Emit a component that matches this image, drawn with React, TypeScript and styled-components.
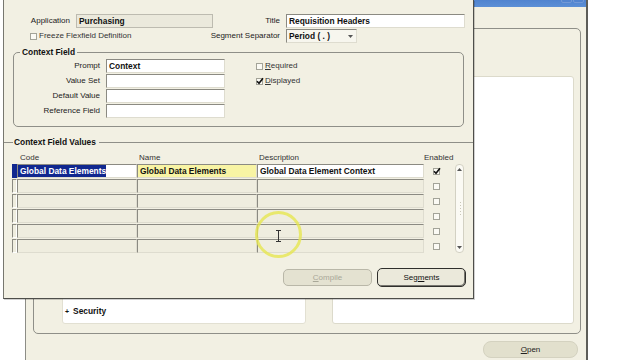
import { Fragment } from "react";
import styled, { createGlobalStyle } from "styled-components";

const GlobalStyle = createGlobalStyle`
  html, body {
    margin: 0;
    padding: 0;
    background: #fff;
  }
  body {
    font-family: "Liberation Sans", Arial, sans-serif;
    color: #1e1e1e;
  }
`;

const WINDOW_BG = "#f2f0e3";
const GROUP_LINE = "#8f8f88";

type FieldKind = "readonly" | "white" | "yellow" | "empty";

const fieldBg: Record<FieldKind, string> = {
  readonly: "#ebe9dc",
  white: "#ffffff",
  yellow: "#f8f4a4",
  empty: "#efeddf",
};

const Desktop = styled.div`
  position: relative;
  width: 640px;
  height: 360px;
  overflow: hidden;
  background: #fff;
`;

/* ---------- window behind ---------- */

const BackWindow = styled.div`
  position: absolute;
  left: 25px;
  top: -13px;
  width: 563px;
  height: 380px;
  box-sizing: border-box;
  border-left: 1px solid #8d8d86;
  border-right: 2px solid #5d5d58;
  background: ${WINDOW_BG};
  display: flex;
  flex-direction: column;
`;

const BackTitleBar = styled.div`
  flex: none;
  height: 20px;
  background: linear-gradient(#3c6dc3, #5b8fd6);
  display: flex;
  align-items: center;
  justify-content: flex-end;
  gap: 1px;
  padding-right: 2px;
`;

const TitleControl = styled.span`
  width: 11px;
  height: 12px;
  box-sizing: border-box;
  border: 1px solid #7399d6;
  border-radius: 2px;
  background: #5284cf;
`;

const BackBody = styled.div`
  flex: 1;
  display: flex;
  flex-direction: column;
  padding: 21px 5px 0 7px;
`;

const NavGroup = styled.div`
  height: 306px;
  box-sizing: border-box;
  border: 1px solid ${GROUP_LINE};
  border-radius: 5px;
  padding: 47px 6px 9px 28px;
  display: grid;
  grid-template-columns: 244px 1fr;
  column-gap: 26px;
`;

const TreePane = styled.div`
  background: #fff;
  border: 1px solid #e2e0d2;
  border-radius: 3px;
  display: flex;
  flex-direction: column;
  justify-content: flex-end;
  padding: 0 0 7px 2px;
`;

const TreeItem = styled.div`
  display: flex;
  align-items: center;
  gap: 4px;
  height: 10px;
  font-size: 8.4px;
  font-weight: bold;
  color: #111;
`;

const TreeBullet = styled.span`
  font-size: 7px;
  line-height: 7px;
`;

const ResultPane = styled.div`
  background: #fff;
  border: 1px solid #dcdacb;
  border-radius: 3px;
`;

const BackFooter = styled.div`
  display: flex;
  justify-content: flex-end;
  padding: 7px 3px 0 0;
`;

const PillButton = styled.button`
  width: 95px;
  height: 17px;
  padding: 0;
  border: 1px solid #d4d2c0;
  border-radius: 8px;
  background: #e2e0cd;
  font-family: inherit;
  font-size: 8px;
  color: #222;
`;

/* ---------- front window ---------- */

const FrontWindow = styled.div`
  position: absolute;
  left: 3px;
  top: 0;
  width: 471px;
  height: 299px;
  box-sizing: border-box;
  background: ${WINDOW_BG};
  border-left: 1px solid #77776f;
  border-right: 1px solid #4e4e4a;
  border-bottom: 1px solid #4e4e4a;
  box-shadow: 1px 1px 0 rgba(0, 0, 0, 0.18);
  display: flex;
  flex-direction: column;
`;

const HeaderGrid = styled.div`
  margin-top: 14px;
  display: grid;
  grid-template-columns: 66px 137px 61px 179px;
  grid-auto-rows: 14px;
  column-gap: 6px;
  row-gap: 1px;
`;

const Label = styled.span`
  display: flex;
  justify-content: flex-end;
  font-size: 8px;
  line-height: 14px;
  color: #222;
  white-space: nowrap;
`;

const Field = styled.div<{ $kind?: FieldKind }>`
  height: 14px;
  box-sizing: border-box;
  border: 1px solid;
  border-color: ${(p) =>
    p.$kind === "readonly"
      ? "#bdbbb0"
      : "#8b8a82 #dedccf #dedccf #8b8a82"};
  background: ${(p) => fieldBg[p.$kind ?? "white"]};
  padding: 0 2px;
  font-size: 8.4px;
  font-weight: bold;
  line-height: 12px;
  color: #111;
  white-space: nowrap;
  overflow: hidden;
`;

const Selected = styled.span`
  display: inline-block;
  margin-left: -2px;
  padding: 0 0 0 2px;
  background: #10278f;
  color: #fff;
`;

const CheckOption = styled.label<{ $span?: boolean; $indent?: number }>`
  grid-column: ${(p) => (p.$span ? "1 / span 2" : "auto")};
  display: flex;
  align-items: center;
  gap: 2px;
  padding-left: ${(p) => p.$indent ?? 0}px;
  font-size: 8px;
  line-height: 14px;
  color: #333;
  white-space: nowrap;
`;

const Box = styled.span`
  width: 7px;
  height: 7px;
  box-sizing: border-box;
  border: 1px solid #a3a398;
  background: #fbfaf4;
  position: relative;
  flex: none;
`;

const Tick = styled.svg`
  position: absolute;
  left: -1px;
  top: -2px;
`;

const Checkbox = ({ checked }: { checked?: boolean }) => (
  <Box>
    {checked && (
      <Tick width="8" height="8" viewBox="0 0 8 8">
        <path d="M1 4.2 L3 6.3 L7 1.2" fill="none" stroke="#111" strokeWidth="1.6" />
      </Tick>
    )}
  </Box>
);

const Poplist = styled.div`
  width: 71px;
  height: 14px;
  box-sizing: border-box;
  border: 1px solid;
  border-color: #8b8a82 #dedccf #dedccf #8b8a82;
  background: #f7f6ee;
  padding: 0 3px 0 2px;
  display: flex;
  align-items: center;
  justify-content: space-between;
  font-size: 8.4px;
  font-weight: bold;
  color: #111;
`;

const ContextGroup = styled.div`
  position: relative;
  margin: 9px 0 0 9px;
  width: 451px;
  height: 75px;
  box-sizing: border-box;
  border: 1px solid ${GROUP_LINE};
  border-radius: 5px;
  padding-top: 6px;
  display: grid;
  grid-template-columns: 86px 119px auto;
  grid-auto-rows: 14px;
  column-gap: 6px;
  row-gap: 1px;
  align-content: start;

  & > ${Label} {
    grid-column: 1;
  }
`;

const Legend = styled.span`
  position: absolute;
  top: -6px;
  left: 6px;
  padding: 0 2px;
  background: ${WINDOW_BG};
  font-size: 8.4px;
  font-weight: bold;
  line-height: 10px;
  color: #111;
`;

const SectionTitle = styled.div`
  margin-top: 10px;
  height: 10px;
  display: flex;
  align-items: center;
  font-size: 8.4px;
  font-weight: bold;
  color: #111;

  &::before,
  &::after {
    content: "";
    height: 1px;
    background: ${GROUP_LINE};
  }
  &::before {
    width: 9px;
    margin-right: 1px;
  }
  &::after {
    flex: 1;
    margin-left: 3px;
  }
`;

const COLUMNS = "5px 120px 120px 167px 31px";

const ColumnHeads = styled.div`
  margin: 6px 0 0 8px;
  height: 10px;
  display: grid;
  grid-template-columns: ${COLUMNS};
  font-size: 8px;
  line-height: 10px;
  color: #333;
`;

const Head = styled.span<{ $pad: number }>`
  padding-left: ${(p) => p.$pad}px;
  white-space: nowrap;
`;

const TableBody = styled.div`
  margin: 1px 0 0 8px;
  display: flex;
`;

const Records = styled.div`
  display: flex;
  flex-direction: column;
  gap: 1px;
`;

const DataRow = styled.div`
  display: grid;
  grid-template-columns: ${COLUMNS};
  height: 14px;
`;

const Indicator = styled.span<{ $current?: boolean }>`
  box-sizing: border-box;
  border: 1px solid;
  border-color: ${(p) => (p.$current ? "#10278f" : "#8b8a82 #fff #fff #8b8a82")};
  background: ${(p) => (p.$current ? "#10278f" : "#efeddf")};
`;

const EnabledCell = styled.span`
  display: flex;
  align-items: center;
  padding-left: 9px;
`;

const Scrollbar = styled.div`
  width: 9px;
  height: 89px;
  box-sizing: border-box;
  border: 1px solid #d3d1c3;
  border-radius: 4px;
  background: #fbfaf4;
  padding: 3px 0;
  display: flex;
  flex-direction: column;
  align-items: center;
  justify-content: space-between;
`;

const Grip = styled.div`
  display: flex;
  flex-direction: column;
  gap: 2px;
  margin-left: 2px;

  & > span {
    width: 1px;
    height: 1px;
    background: #c9c7b8;
  }
`;

const ButtonRow = styled.div`
  margin-top: 15px;
  padding-right: 7px;
  height: 19px;
  display: flex;
  justify-content: flex-end;
  align-items: center;
  gap: 5px;
`;

const FormButton = styled.button<{ $primary?: boolean }>`
  width: 89px;
  height: ${(p) => (p.$primary ? 19 : 17)}px;
  padding: 0;
  border-radius: 5px;
  border: 1px solid ${(p) => (p.$primary ? "#2f2f2c" : "#b9b7a8")};
  box-shadow: ${(p) => (p.$primary ? "inset -1px -1px 0 #77766f" : "none")};
  background: ${(p) => (p.$primary ? "#ebe9db" : "#e4e2d1")};
  font-family: inherit;
  font-size: 8px;
  color: ${(p) => (p.$primary ? "#111" : "#a9a898")};
`;

/* ---------- pointer overlay ---------- */

const CursorRing = styled.div`
  position: absolute;
  left: 255px;
  top: 211px;
  width: 47px;
  height: 47px;
  box-sizing: border-box;
  border: 3px solid rgba(230, 230, 80, 0.8);
  border-radius: 50%;
  pointer-events: none;
`;

const IBeam = styled.svg`
  position: absolute;
  left: 275px;
  top: 230px;
  pointer-events: none;
`;

const tableRows = [
  { code: "Global Data Elements", name: "Global Data Elements", desc: "Global Data Element Context", enabled: true },
  { code: "", name: "", desc: "", enabled: false },
  { code: "", name: "", desc: "", enabled: false },
  { code: "", name: "", desc: "", enabled: false },
  { code: "", name: "", desc: "", enabled: false },
  { code: "", name: "", desc: "", enabled: false },
];

const contextFields = [
  { label: "Prompt", value: "Context" },
  { label: "Value Set", value: "" },
  { label: "Default Value", value: "" },
  { label: "Reference Field", value: "" },
];

const Arrow = ({ up }: { up?: boolean }) => (
  <svg width="5" height="3" viewBox="0 0 5 3">
    <path d={up ? "M0 3 L2.5 0 L5 3 Z" : "M0 0 L2.5 3 L5 0 Z"} fill="#555" />
  </svg>
);

export default function App() {
  return (
    <>
      <GlobalStyle />
      <Desktop>
        <BackWindow>
          <BackTitleBar>
            <TitleControl />
            <TitleControl />
          </BackTitleBar>
          <BackBody>
            <NavGroup>
              <TreePane>
                <TreeItem>
                  <TreeBullet>+</TreeBullet>
                  Security
                </TreeItem>
              </TreePane>
              <ResultPane />
            </NavGroup>
            <BackFooter>
              <PillButton>
                <u>O</u>pen
              </PillButton>
            </BackFooter>
          </BackBody>
        </BackWindow>

        <FrontWindow>
          <HeaderGrid>
            <Label>Application</Label>
            <Field $kind="readonly">Purchasing</Field>
            <Label>Title</Label>
            <Field>Requisition Headers</Field>

            <CheckOption $span $indent={26}>
              <Checkbox />
              Freeze Flexfield Definition
            </CheckOption>
            <Label>Segment Separator</Label>
            <Poplist>
              Period ( . )
              <Arrow />
            </Poplist>
          </HeaderGrid>

          <ContextGroup>
            <Legend>Context Field</Legend>
            {contextFields.map((f, i) => (
              <Fragment key={f.label}>
                <Label>{f.label}</Label>
                <Field>{f.value}</Field>
                {i === 0 && (
                  <CheckOption $indent={25}>
                    <Checkbox />
                    <span>
                      <u>R</u>equired
                    </span>
                  </CheckOption>
                )}
                {i === 1 && (
                  <CheckOption $indent={25}>
                    <Checkbox checked />
                    <span>
                      <u>D</u>isplayed
                    </span>
                  </CheckOption>
                )}
              </Fragment>
            ))}
          </ContextGroup>

          <SectionTitle>Context Field Values</SectionTitle>

          <ColumnHeads>
            <span />
            <Head $pad={3}>Code</Head>
            <Head $pad={2}>Name</Head>
            <Head $pad={2}>Description</Head>
            <Head $pad={0}>Enabled</Head>
          </ColumnHeads>

          <TableBody>
            <Records>
              {tableRows.map((r, i) => {
                const current = i === 0;
                return (
                  <DataRow key={i}>
                    <Indicator $current={current} />
                    <Field $kind={current ? "white" : "empty"}>
                      {r.code && <Selected>{r.code}</Selected>}
                    </Field>
                    <Field $kind={current ? "yellow" : "empty"}>{r.name}</Field>
                    <Field $kind={current ? "white" : "empty"}>{r.desc}</Field>
                    <EnabledCell>
                      <Checkbox checked={r.enabled} />
                    </EnabledCell>
                  </DataRow>
                );
              })}
            </Records>
            <Scrollbar>
              <Arrow up />
              <Grip>
                <span />
                <span />
                <span />
                <span />
                <span />
              </Grip>
              <Arrow />
            </Scrollbar>
          </TableBody>

          <ButtonRow>
            <FormButton disabled>
              <u>C</u>ompile
            </FormButton>
            <FormButton $primary>
              Seg<u>m</u>ents
            </FormButton>
          </ButtonRow>
        </FrontWindow>

        <CursorRing />
        <IBeam width="7" height="12" viewBox="0 0 7 12">
          <path d="M1 0.5 H6 M3.5 0.5 V11.5 M1 11.5 H6" fill="none" stroke="#333" strokeWidth="1" />
        </IBeam>
      </Desktop>
    </>
  );
}
